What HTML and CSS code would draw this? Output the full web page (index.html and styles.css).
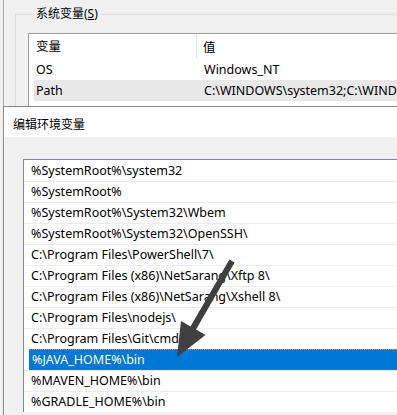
FILE: index.html
```html
<!DOCTYPE html>
<html lang="zh-CN">
<head>
    <meta charset="UTF-8">
    <meta name="viewport" content="width=device-width, initial-scale=1.0">
    <title>编辑环境变量</title>
    <link rel="stylesheet" href="styles.css">
</head>
<body>
    <div class="desktop">
        <!-- 环境变量窗口 (后面) -->
        <div class="back-window">
            <fieldset class="group">
                <legend>系统变量(<u>S</u>)</legend>
                <div class="var-table">
                    <div class="var-head">
                        <span class="head-name">变量</span>
                        <span class="head-value">值</span>
                    </div>
                    <div class="var-row">
                        <span class="col-name">OS</span>
                        <span class="col-value">Windows_NT</span>
                    </div>
                    <div class="var-row var-row-hover">
                        <span class="col-name">Path</span>
                        <span class="col-value">C:\WINDOWS\system32;C:\WINDOWS;C:\WINDOWS\System32\Wbem</span>
                    </div>
                    <div class="var-row">
                        <span class="col-name">PATHEXT</span>
                        <span class="col-value">.COM;.EXE;.BAT;.CMD;.VBS;.VBE;.JS;.JSE;.WSF;.WSH;.MSC</span>
                    </div>
                </div>
            </fieldset>
        </div>

        <!-- 编辑环境变量 (前面) -->
        <div class="edit-window">
            <div class="title-bar">编辑环境变量</div>
            <div class="dialog-body">
                <ul class="path-list">
                    <li>%SystemRoot%\system32</li>
                    <li>%SystemRoot%</li>
                    <li>%SystemRoot%\System32\Wbem</li>
                    <li>%SystemRoot%\System32\OpenSSH\</li>
                    <li>C:\Program Files\PowerShell\7\</li>
                    <li>C:\Program Files (x86)\NetSarang\Xftp 8\</li>
                    <li>C:\Program Files (x86)\NetSarang\Xshell 8\</li>
                    <li>C:\Program Files\nodejs\</li>
                    <li>C:\Program Files\Git\cmd</li>
                    <li class="selected">%JAVA_HOME%\bin</li>
                    <li>%MAVEN_HOME%\bin</li>
                    <li>%GRADLE_HOME%\bin</li>
                </ul>
            </div>
        </div>

        <!-- 标注箭头 -->
        <svg class="arrow" width="397" height="415" viewBox="0 0 397 415">
            <polygon points="234.6,262.5 196,329.5 205.5,335 177,357 181,321 190.5,326.5 229.4,259.5" fill="#3f3f3f"/>
        </svg>
    </div>
</body>
</html>
```

FILE: styles.css
```css
* {
    box-sizing: border-box;
}

body {
    margin: 0;
    font-family: 'Noto Sans', 'Noto Sans CJK SC', sans-serif;
    font-size: 12.5px;
    color: #000;
    background-color: #f0f0f0;
}

.desktop {
    position: relative;
    width: 397px;
    height: 415px;
    overflow: hidden;
}

/* back window */
.back-window {
    height: 100%;
    margin-left: 3px;
    border-left: 1px solid #a9a9a9;
    padding: 6px 0 0 11px;
}

.group {
    margin: 0;
    padding: 0 0 0 12px;
    min-width: 0;
    border: 1px solid #dcdcdc;
    border-right: none;
    border-bottom: none;
    height: 100%;
}

.group legend {
    margin-left: 5px;
    padding: 0 3px;
    line-height: 16px;
    font-size: 12px;
}

.var-table {
    margin-top: 11px;
    width: 500px;
    background-color: #fff;
    border: 1px solid #a0a0a0;
    border-right: none;
}

.var-head,
.var-row {
    display: flex;
    align-items: center;
    white-space: nowrap;
}

.var-head {
    height: 25px;
}

.head-name {
    flex-shrink: 0;
    width: 168px;
    padding-left: 7px;
    border-right: 1px solid #e5e5e5;
    line-height: 25px;
}

.head-value {
    padding-left: 6px;
}

.var-row {
    height: 21px;
    margin-left: 5px;
}

.var-row-hover {
    background-color: #e8e8e8;
}

.col-name {
    flex-shrink: 0;
    width: 163px;
    padding-left: 2px;
}

.col-value {
    padding-left: 7px;
}

/* edit window */
.edit-window {
    position: absolute;
    left: 3px;
    top: 106px;
    right: 0;
    bottom: 0;
    background-color: #f0f0f0;
    border-left: 1px solid #8c8c8c;
    border-top: 1px solid #8c8c8c;
}

.title-bar {
    height: 30px;
    padding: 3px 0 0 9px;
    display: flex;
    align-items: center;
    background-color: #fff;
    font-size: 12px;
}

.dialog-body {
    padding: 22px 0 0 19px;
}

.path-list {
    margin: 0;
    padding: 0;
    list-style: none;
    width: 500px;
    background-color: #fff;
    border: 1px solid #828790;
    border-right: none;
    border-bottom: none;
}

.path-list li {
    height: 21px;
    padding-left: 7px;
    border-top: 1px solid #ececec;
    line-height: 20px;
    white-space: nowrap;
}

.path-list li:first-child {
    border-top-color: #fff;
}

.path-list li.selected {
    margin-left: 5px;
    padding-left: 3px;
    background-color: #0078d7;
    color: #fff;
    border-top: 1px dotted #e0852c;
}

.arrow {
    position: absolute;
    left: 0;
    top: 0;
    pointer-events: none;
}
```
